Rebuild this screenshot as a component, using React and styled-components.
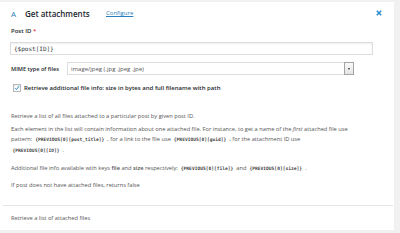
import React from "react"
import styled, { createGlobalStyle } from "styled-components"

const GlobalStyle = createGlobalStyle`
  html, body {
    margin: 0;
    padding: 0;
    background: #f1f1f1;
    font-family: "Open Sans", "Noto Sans", sans-serif;
    color: #444;
  }
`

const Card = styled.div`
  width: 394px;
  height: 228px;
  margin: 2px 0 0 0;
  background: #fff;
  box-shadow: 0 1px 1px rgba(0, 0, 0, 0.04);
  display: flex;
  flex-direction: column;
`

const Header = styled.div`
  height: 24px;
  display: flex;
  align-items: center;
  padding: 0 11px;
`

const Letter = styled.span`
  color: #2a7fba;
  font-size: 8px;
  width: 14px;
`

const Title = styled.span`
  color: #23282d;
  font-size: 8px;
  font-weight: 600;
  width: 81px;
`

const ConfigureLink = styled.a`
  color: #2a7fba;
  font-size: 6px;
  text-decoration: underline;
`

const Close = styled.span`
  margin-left: auto;
  display: flex;
  margin-right: 1px;
`

const Body = styled.div`
  padding: 0 11px 0 11px;
  flex: 1;
`

const Label = styled.div`
  margin-top: 3px;
  font-size: 6px;
  line-height: 9px;
  font-weight: 600;
  color: #23282d;
  .req {
    color: #dc3232;
  }
`

const TextInput = styled.div`
  box-sizing: border-box;
  margin: 6px 0 0 -1px;
  width: 363px;
  height: 13px;
  border: 1px solid #ddd;
  box-shadow: inset 0 1px 2px rgba(0, 0, 0, 0.07);
  display: flex;
  align-items: center;
  padding-left: 3px;
  font-family: "DejaVu Sans Mono", "Liberation Mono", monospace;
  font-size: 6px;
  color: #32373c;
`

const Row = styled.div`
  display: flex;
  align-items: center;
  margin-top: ${({ $top }) => $top}px;
`

const InlineLabel = styled.span`
  font-size: 5.6px;
  font-weight: 600;
  color: #23282d;
  width: 56px;
`

const Select = styled.div`
  box-sizing: border-box;
  width: 287px;
  height: 13px;
  border: 1px solid #ddd;
  display: flex;
  align-items: center;
  padding-left: 3px;
  font-size: 6px;
  color: #555;
`

const SelectButton = styled.span`
  margin-left: auto;
  box-sizing: border-box;
  width: 10px;
  height: 13px;
  margin-right: -1px;
  border: 1px solid #a5a5a5;
  background: linear-gradient(#fafafa, #e4e4e4);
  display: flex;
  align-items: center;
  justify-content: center;
  &::after {
    content: "";
    border-left: 1.5px solid transparent;
    border-right: 1.5px solid transparent;
    border-top: 2px solid #333;
  }
`

const Checkbox = styled.span`
  box-sizing: border-box;
  width: 8px;
  height: 8px;
  margin-left: 2px;
  margin-right: 3px;
  border: 1px solid #b4b9be;
  background: #fff;
  box-shadow: inset 0 1px 2px rgba(0, 0, 0, 0.1);
  display: flex;
  align-items: center;
  justify-content: center;
`

const CheckText = styled.span`
  font-size: 6px;
  font-weight: 600;
  color: #23282d;
`

const Para = styled.p`
  margin: ${({ $top }) => $top}px 0 0 0;
  font-size: 5.7px;
  line-height: 10px;
  color: #555;
  em {
    font-style: italic;
  }
  b {
    font-weight: 600;
  }
`

const Code = styled.code`
  font-family: "DejaVu Sans Mono", "Liberation Mono", monospace;
  font-size: 4.6px;
  font-weight: 700;
  color: #444;
  padding: 0 1.5px;
`

const Divider = styled.hr`
  margin: 15px 1px 0 3px;
  border: 0;
  border-top: 1px solid #e5e5e5;
`

const Footer = styled.div`
  height: 26px;
  display: flex;
  align-items: center;
  padding-left: 11px;
  font-size: 5.7px;
  color: #555;
`

const CloseIcon = () => (
  <svg width="6" height="6" viewBox="0 0 6 6">
    <path d="M0.8 0.8 L5.2 5.2 M5.2 0.8 L0.8 5.2" stroke="#2a8bcb" strokeWidth="1.5" />
  </svg>
)

const CheckIcon = () => (
  <svg width="6" height="6" viewBox="0 0 6 6">
    <path d="M1 3.2 L2.4 4.6 L5 1.2" stroke="#1e8cbe" strokeWidth="1" fill="none" />
  </svg>
)

const App = () => (
  <>
    <GlobalStyle />
    <Card>
      <Header>
        <Letter>A</Letter>
        <Title>Get attachments</Title>
        <ConfigureLink href="#">Configure</ConfigureLink>
        <Close>
          <CloseIcon />
        </Close>
      </Header>
      <Body>
        <Label>
          Post ID <span className="req">*</span>
        </Label>
        <TextInput>{"{$post[ID]}"}</TextInput>
        <Row $top={7}>
          <InlineLabel>MIME type of files</InlineLabel>
          <Select>
            image/jpeg (.jpg .jpeg .jpe)
            <SelectButton />
          </Select>
        </Row>
        <Row $top={9}>
          <Checkbox>
            <CheckIcon />
          </Checkbox>
          <CheckText>Retrieve additional file info: size in bytes and full filename with path</CheckText>
        </Row>
        <Para $top={19}>Retrieve a list of all files attached to a particular post by given post ID.</Para>
        <Para $top={3}>
          Each element in the list will contain information about one attached file. For instance, to get a name of
          the <em>first</em> attached file use
          <br />
          pattern: <Code>{"{PREVIOUS[0][post_title]}"}</Code> , for a link to the file use{" "}
          <Code>{"{PREVIOUS[0][guid]}"}</Code> , for the attachment ID use
          <br />
          <Code>{"{PREVIOUS[0][ID]}"}</Code> .
        </Para>
        <Para $top={7}>
          Additional file info available with keys <b>file</b> and <b>size</b> respectively:{" "}
          <Code>{"{PREVIOUS[0][file]}"}</Code> and <Code>{"{PREVIOUS[0][size]}"}</Code> .
        </Para>
        <Para $top={6}>If post does not have attached files, returns false</Para>
      </Body>
      <Divider />
      <Footer>Retrieve a list of attached files</Footer>
    </Card>
  </>
)

export default App
